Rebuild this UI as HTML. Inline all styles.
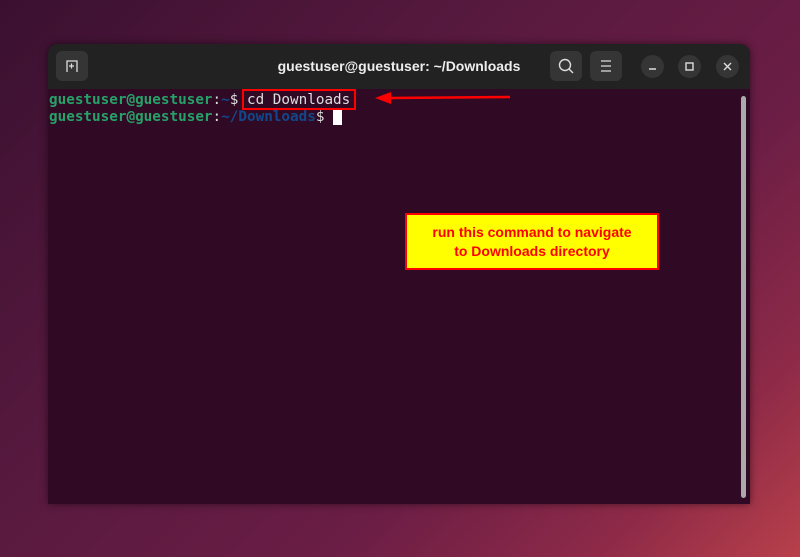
<!DOCTYPE html>
<html><head><style>
html,body{margin:0;padding:0}
body{width:800px;height:557px;overflow:hidden;position:relative;
background:linear-gradient(135deg,#3a1030 0%,#5a1a40 40%,#6a1d45 65%,#8e2a48 85%,#b8404a 100%);font-family:"Liberation Sans",sans-serif}
.win{position:absolute;left:48px;top:44px;width:702px;height:460px;border-radius:10px 10px 0 0;overflow:hidden;background:#300a24;box-shadow:0 0 8px rgba(0,0,0,.5)}
.hdr{position:absolute;left:0;top:0;width:702px;height:45px;background:#222222}
.title{position:absolute;left:0;right:0;top:14px;text-align:center;color:#eee;font-weight:bold;font-size:14px}
.btn{position:absolute;top:7px;width:32px;height:30px;background:#353535;border-radius:6px}
.cb{position:absolute;top:11px;width:23px;height:23px;border-radius:50%;background:#353535}
.term{position:absolute;left:1px;top:48px;font-family:"DejaVu Sans Mono","Liberation Mono",monospace;font-size:14.3px;line-height:17px;color:#ddd;white-space:pre}
.g{color:#26a269;font-weight:bold}.b{color:#12488b;font-weight:bold}
.sb{position:absolute;left:693px;top:52px;width:5px;height:402px;background:#aaa;border-radius:3px}
</style></head><body>
<div class="win">
<div class="hdr">
<div class="btn" style="left:8px"><svg width="32" height="30"><path d="M11 21V10h10v11M13 15h5M15.5 12.5v5" stroke="#ddd" stroke-width="1.3" fill="none"/></svg></div>
<div class="title">guestuser@guestuser: ~/Downloads</div>
<div class="btn" style="left:502px"><svg width="32" height="30"><circle cx="15" cy="14" r="5.5" stroke="#ddd" stroke-width="1.4" fill="none"/><path d="M19 18l4 4" stroke="#ddd" stroke-width="1.4"/></svg></div>
<div class="btn" style="left:542px"><svg width="32" height="30"><path d="M11 10h10M11 15h10M11 20h10" stroke="#ddd" stroke-width="1.3"/></svg></div>
<div class="cb" style="left:593px"><svg width="23" height="23"><path d="M8 14h7" stroke="#ddd" stroke-width="1.4"/></svg></div>
<div class="cb" style="left:630px"><svg width="23" height="23"><rect x="8" y="8" width="7" height="7" stroke="#ddd" stroke-width="1.4" fill="none"/></svg></div>
<div class="cb" style="left:668px"><svg width="23" height="23"><path d="M8 8l7 7M15 8l-7 7" stroke="#ddd" stroke-width="1.4"/></svg></div>
</div>
<div class="term"><span class="g">guestuser@guestuser</span>:<span class="b">~</span>$ cd Downloads
<span class="g">guestuser@guestuser</span>:<span class="b">~/Downloads</span>$ <span style="background:#fff"> </span></div>
<div class="sb"></div>
</div>
<div style="position:absolute;left:242px;top:89px;width:110px;height:17px;border:2px solid #f00"></div>
<svg style="position:absolute;left:370px;top:88px" width="145" height="20"><path d="M18 10L140 9" stroke="#f00" stroke-width="2.5"/><path d="M5 10l16-6v12z" fill="#f00"/></svg>
<div style="position:absolute;left:405px;top:213px;width:250px;background:#ff0;border:2px solid #f00;color:#f00;font-weight:bold;font-size:14px;line-height:19px;text-align:center;padding-top:8px;box-sizing:content-box;height:45px">run this command to navigate<br>to Downloads directory</div>
</body></html>
